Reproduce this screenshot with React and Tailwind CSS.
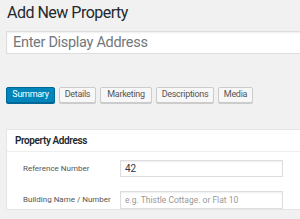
import React from 'react';

const tabs = [
  { label: 'Summary', w: 'w-[49px]' },
  { label: 'Details', w: 'w-[37px]' },
  { label: 'Marketing', w: 'w-[52px]' },
  { label: 'Descriptions', w: 'w-[58px]' },
  { label: 'Media', w: 'w-[35px]' },
];

export default function App() {
  return (
    <div className="w-[300px] h-[219px] overflow-hidden bg-[#f1f1f1] pl-[6px] font-['Roboto',sans-serif] text-[#23282d]">
      {/* Title */}
      <h1 className="pl-[1px] pt-[1px] h-[31px] text-[16px] leading-[24px] tracking-[-0.5px] text-[#23282d]">Add New Property</h1>

      {/* Display address */}
      <div className="w-[310px] h-[23px] bg-white border border-[#ddd] shadow-[inset_0_1px_2px_rgba(0,0,0,0.07)] pl-[6px] flex items-center text-[14.5px] tracking-[-0.3px] text-[#72777c]">
        Enter Display Address
      </div>

      {/* Tabs */}
      <div className="mt-[33px] flex gap-[4px]">
        {tabs.map((t, i) => (
          <div
            key={t.label}
            className={
              (i === 0
                ? 'bg-[#0085ba] border-[#006799] text-white shadow-[0_1px_0_#006799] '
                : 'bg-[#f7f7f7] border-[#ccc] text-[#555] shadow-[0_1px_0_#ccc] ') +
              t.w +
              ' h-[16px] flex items-center justify-center rounded-[2px] border text-[9px] tracking-[-0.3px]'
            }
          >
            {t.label}
          </div>
        ))}
      </div>

      {/* Panel */}
      <div className="mt-[26px] w-[310px] bg-white border border-[#e5e5e5]">
        <div className="h-[22px] border-b border-[#eee] pl-[8px] flex items-center text-[10px] font-semibold tracking-[-0.4px] text-[#23282d]">
          Property Address
        </div>
        <div className="pl-[16px] pt-[8px]">
          <div className="flex items-center h-[17px]">
            <div className="w-[97px] whitespace-nowrap text-[8px] text-[#555]">Reference Number</div>
            <div className="w-[163px] h-[17px] border border-[#ddd] bg-white pl-[4px] flex items-center text-[10px] text-[#32373c] shadow-[inset_0_1px_2px_rgba(0,0,0,0.07)]">42</div>
          </div>
          <div className="flex items-center h-[18px] mt-[14px]">
            <div className="w-[97px] whitespace-nowrap text-[8px] text-[#555]">Building Name / Number</div>
            <div className="w-[163px] h-[18px] border border-[#ddd] bg-white pl-[4px] flex items-center text-[8.5px] text-[#999] shadow-[inset_0_1px_2px_rgba(0,0,0,0.07)]">e.g. Thistle Cottage. or Flat 10</div>
          </div>
        </div>
      </div>
    </div>
  );
}
